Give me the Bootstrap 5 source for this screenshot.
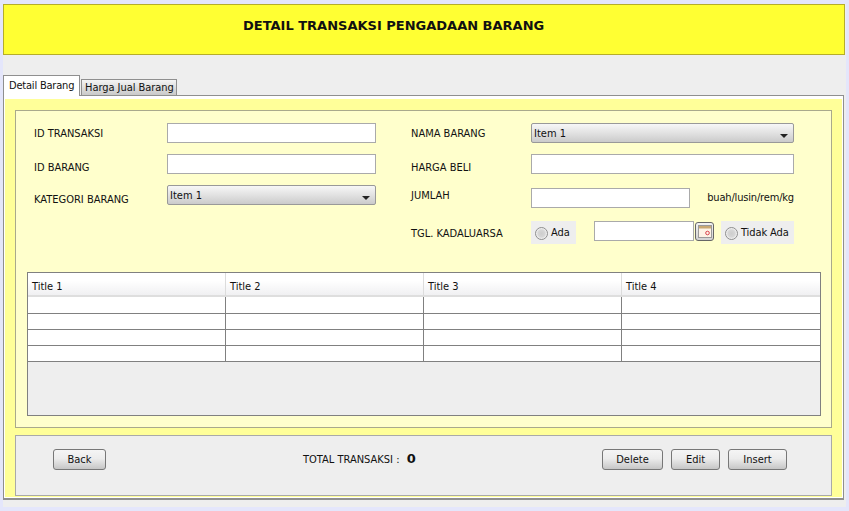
<!DOCTYPE html>
<html lang="id">
<head>
<meta charset="utf-8">
<title>Detail Transaksi Pengadaan Barang</title>
<link href="https://cdn.jsdelivr.net/npm/bootstrap@5.3.0/dist/css/bootstrap.min.css" rel="stylesheet">
<style>
html,body{height:511px;overflow:hidden}
body{background:#e4e6fb;font-family:"DejaVu Sans Condensed","DejaVu Sans",sans-serif;font-size:11px;color:#111;padding:4px 3px 4px 3px;line-height:1.2}
.appframe{width:843px;height:503px;background:#eeeeee}
.titlebar{width:842px;height:51px;background:#ffff33;border:1px solid #b5ad2a;padding:13px 0 0 239px;font-family:"DejaVu Sans",sans-serif;font-weight:700;font-size:13px;color:#111}
.tabstrip{margin-top:20px;height:20px;align-items:flex-end;border:0;gap:1px;flex-wrap:nowrap}
.tabone,.tabtwo{display:block;border:1px solid #8f8f8f;border-bottom:0;color:#111;text-decoration:none}
.tabone{width:77px;height:21px;background:#fff;padding:3px 0 0 5px;margin-bottom:-1px;position:relative;z-index:1;letter-spacing:-.2px}
.tabtwo{width:96px;height:16px;background:linear-gradient(#f4f4f4,#c9c9c9);padding:1px 0 0 3px;letter-spacing:-.05px}
.tabbody{width:841px;height:405px;border:1px solid #8f8f8f;border-width:1px 1px 2px 1px;background:#fff;padding:3px 1px 0 1px}
.yellowfill{height:398px;background:#ffff99;padding:11px 10px 0 10px}
.formpanel{width:817px;height:318px;background:#ffffcc;border:1px solid #a9a98c;padding:12px 10px 0 11px}
.fieldcols{height:149px;padding-left:7px}
.leftcol{width:342px}
.rightcol{width:383px;margin-left:35px}
.fieldrow{display:flex;height:20px;margin-bottom:11px}
.rowjumlah{margin-top:14px;margin-bottom:13px}
.fieldlabel{flex:0 0 133px;padding-top:4px}
.rightcol .fieldlabel{flex-basis:120px}
.rowoffset .fieldlabel{padding-top:7px}
.rowupper .fieldlabel{padding-top:1px}
.rowlower .fieldlabel{padding-top:8px}
.rowdate .fieldlabel{padding-top:6px}
.boxinput{display:block;flex:none;height:20px;border:1px solid #aaa;border-radius:0;background:#fff;padding:0 3px;font-size:11px;outline:0;min-height:0}
.wideleft{width:209px}
.wideright{width:263px}
.narrowbox{width:159px}
.datebox{width:100px}
.comboinput.form-select{flex:none;height:20px;min-height:0;border:1px solid #999;border-radius:2px;padding:1px 2px 0;font-size:11px;color:#111;font-family:inherit;line-height:16px;box-shadow:none;background:url("data:image/svg+xml,%3Csvg xmlns='http://www.w3.org/2000/svg' width='8' height='4'%3E%3Cpath d='M0 0h8L4 4z' fill='%23222'/%3E%3C/svg%3E") no-repeat right 5px top 10px,linear-gradient(#f7f7f7,#e4e4e4 45%,#cbcbcb)}
.unittext{margin-left:auto;padding-top:3px;white-space:nowrap;letter-spacing:-.17px}
.radiochip{flex:none;height:23px;background:#eeeeee;display:flex;align-items:center;padding-left:4px;gap:3px;margin:0}
.chipada{width:45px;margin-right:18px}
.chiptidak{width:73px;margin-left:7px;letter-spacing:-.1px}
.radiodot.form-check-input{width:13px;height:13px;margin:1px 0 0;border:1px solid #8d8d8d;background:radial-gradient(circle at 50% 50%,#cdcdcd 0,#d6d6d6 45%,#f8f8f8 75%);box-shadow:none}
.calbtn{flex:none;width:19px;height:19px;margin:1px 0 0 1px;padding:0;border:1px solid #666;border-radius:3px;background:linear-gradient(#f3f3f3,#d2d2d2);display:flex;align-items:center;justify-content:center}
.datagrid{width:794px;height:144px;border:1px solid #808080;background:#eeeeee;overflow:hidden}
.datagrid .gridtable{width:793px;margin:0;table-layout:fixed;border-collapse:separate;border-spacing:0;--bs-table-bg:transparent;font-size:11px;color:#111}
.gridtable th{height:24px;padding:6px 0 0 4px;font-weight:400;background:linear-gradient(#fff 35%,#f0f0f2);border:0;border-right:1px solid #dcdcdc;border-bottom:2px solid #dedede;vertical-align:middle;color:#111}
.gridtable td{height:16px;padding:0;background:#fff;border:0;border-right:1px solid #808080;border-bottom:1px solid #808080}
.gridtable tr:first-child td{height:17px}
.gridtable th:nth-child(-n+3),.gridtable td:nth-child(-n+3){width:198px}
.actionpanel{width:817px;height:61px;margin-top:7px;background:#eeeeee;border:1px solid #a9a9a9;padding:13px 44px 0 37px}
.flatbtn.btn{height:21px;padding:0;font-size:11px;line-height:18px;color:#111;border:1px solid #777;border-radius:3px;background:linear-gradient(#f5f5f5,#ececec 45%,#c6c6c6);--bs-btn-hover-bg:#ddd}
.backbtn{width:53px}
.delbtn{width:61px}
.editbtn{width:49px;margin-left:8px}
.insbtn{width:59px;margin-left:8px}
.totalarea{margin-left:197px;width:299px;padding-top:2px;height:21px}
.totalnum{font-family:"DejaVu Sans",sans-serif;font-weight:700;font-size:13px;margin-left:4px}
</style>
</head>
<body>
<div class="appframe">
  <div class="titlebar">DETAIL TRANSAKSI PENGADAAN BARANG</div>
  <ul class="nav tabstrip d-flex">
    <li class="nav-item"><a class="tabone" href="#">Detail Barang</a></li>
    <li class="nav-item"><a class="tabtwo" href="#">Harga Jual Barang</a></li>
  </ul>
  <div class="tabbody">
    <div class="yellowfill">
      <div class="formpanel">
        <div class="d-flex fieldcols">
          <div class="leftcol">
            <div class="fieldrow"><span class="fieldlabel">ID TRANSAKSI</span><input class="boxinput wideleft" type="text"></div>
            <div class="fieldrow rowoffset"><span class="fieldlabel">ID BARANG</span><input class="boxinput wideleft" type="text"></div>
            <div class="fieldrow rowlower"><span class="fieldlabel">KATEGORI BARANG</span><select class="form-select comboinput wideleft"><option>Item 1</option></select></div>
          </div>
          <div class="rightcol">
            <div class="fieldrow"><span class="fieldlabel">NAMA BARANG</span><select class="form-select comboinput wideright"><option>Item 1</option></select></div>
            <div class="fieldrow rowoffset"><span class="fieldlabel">HARGA BELI</span><input class="boxinput wideright" type="text"></div>
            <div class="fieldrow rowjumlah rowupper"><span class="fieldlabel">JUMLAH</span><input class="boxinput narrowbox" type="text"><span class="unittext">buah/lusin/rem/kg</span></div>
            <div class="fieldrow rowdate"><span class="fieldlabel">TGL. KADALUARSA</span>
              <label class="radiochip chipada"><input class="form-check-input radiodot" type="radio" name="kadaluarsa">Ada</label>
              <input class="boxinput datebox" type="text">
              <button class="calbtn" type="button" aria-label="Kalender"><svg width="14" height="13" viewBox="0 0 14 13"><rect x=".5" y=".5" width="13" height="12" fill="#fdf3e6" stroke="#9a9a9a"/><rect x="1" y="1" width="12" height="2.500" fill="#c9a873"/><circle cx="9.500" cy="8" r="1.800" fill="none" stroke="#d9434e"/></svg></button>
              <label class="radiochip chiptidak"><input class="form-check-input radiodot" type="radio" name="kadaluarsa">Tidak Ada</label>
            </div>
          </div>
        </div>
        <div class="datagrid">
          <table class="table gridtable">
            <thead><tr><th>Title 1</th><th>Title 2</th><th>Title 3</th><th>Title 4</th></tr></thead>
            <tbody>
              <tr><td></td><td></td><td></td><td></td></tr>
              <tr><td></td><td></td><td></td><td></td></tr>
              <tr><td></td><td></td><td></td><td></td></tr>
              <tr><td></td><td></td><td></td><td></td></tr>
            </tbody>
          </table>
        </div>
      </div>
      <div class="actionpanel d-flex align-items-start">
        <button class="btn flatbtn backbtn" type="button">Back</button>
        <div class="totalarea">TOTAL TRANSAKSI : <span class="totalnum">0</span></div>
        <button class="btn flatbtn delbtn" type="button">Delete</button>
        <button class="btn flatbtn editbtn" type="button">Edit</button>
        <button class="btn flatbtn insbtn" type="button">Insert</button>
      </div>
    </div>
  </div>
</div>
<script src="https://cdn.jsdelivr.net/npm/bootstrap@5.3.0/dist/js/bootstrap.bundle.min.js"></script>
</body>
</html>
